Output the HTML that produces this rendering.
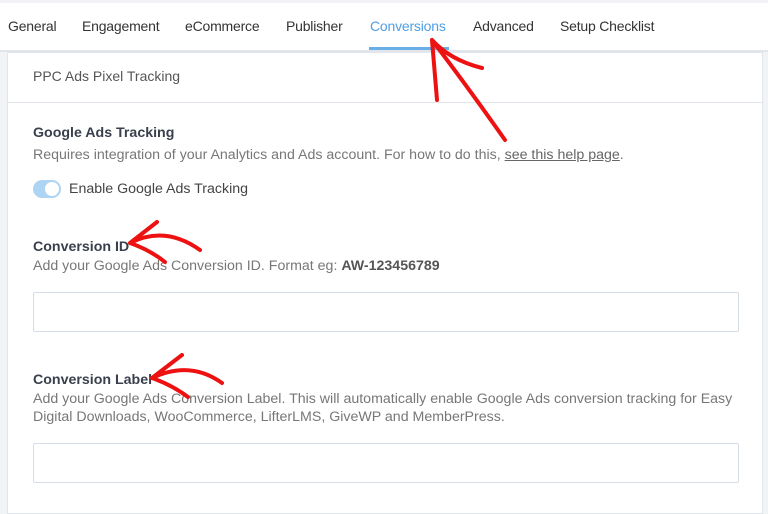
<!DOCTYPE html>
<html><head><style>
body{margin:0;width:768px;height:509px;background:#f1f3f6;font-family:"Liberation Sans",sans-serif;position:relative;overflow:hidden}
.nav{position:absolute;top:3px;left:0;width:768px;height:47px;background:#fff;border-bottom:2px solid #e2e6ec}
.nav span{position:absolute;top:15px;font-size:14px;color:#333;letter-spacing:-0.2px}
.nav .act{color:#509fe2}
.ul{position:absolute;left:369px;top:47px;width:80px;height:3px;background:#6aaee8}
.panel{position:absolute;left:7px;top:52px;width:754px;height:460px;background:#fff;border:1px solid #e2e6ec}
.hdr{position:absolute;left:0;top:0;width:754px;height:49px;border-bottom:1px solid #e2e6ec}
.t{position:absolute;white-space:nowrap;font-size:14.2px;color:#777}
.b{font-weight:bold;color:#393f4c;font-size:14.2px}
.inp{position:absolute;left:25px;width:704px;height:38px;border:1px solid #d6dde5;border-radius:2px;background:#fff}
</style></head><body>
<div class="nav">
<span style="left:8px">General</span>
<span style="left:82px">Engagement</span>
<span style="left:185px">eCommerce</span>
<span style="left:286px">Publisher</span>
<span class="act" style="left:370px">Conversions</span>
<span style="left:473px">Advanced</span>
<span style="left:560px">Setup Checklist</span>
</div>
<div class="ul"></div>
<div class="panel">
<div class="hdr"><div class="t" style="left:25px;top:15px;color:#555;font-size:14px">PPC Ads Pixel Tracking</div></div>
<div class="t b" style="left:25px;top:72px">Google Ads Tracking</div>
<div class="t" style="left:25px;top:94px">Requires integration of your Analytics and Ads account. For how to do this, <span style="text-decoration:underline;color:#666">see this help page</span>.</div>
<div style="position:absolute;left:25px;top:127px;width:28px;height:18px;border-radius:9px;background:#aed4f3"><div style="position:absolute;right:2px;top:2px;width:14px;height:14px;border-radius:7px;background:#fff"></div></div>
<div class="t" style="left:61px;top:128px;color:#444">Enable Google Ads Tracking</div>
<div class="t b" style="left:25px;top:186px">Conversion ID</div>
<div class="t" style="left:25px;top:205px">Add your Google Ads Conversion ID. Format eg: <b style="color:#555">AW-123456789</b></div>
<div class="inp" style="top:239px"></div>
<div class="t b" style="left:25px;top:319px">Conversion Label</div>
<div class="t" style="left:25px;top:338px">Add your Google Ads Conversion Label. This will automatically enable Google Ads conversion tracking for Easy</div>
<div class="t" style="left:25px;top:356px">Digital Downloads, WooCommerce, LifterLMS, GiveWP and MemberPress.</div>
<div class="inp" style="top:390px"></div>
</div>
<svg width="768" height="509" style="position:absolute;left:0;top:0" fill="none" stroke="#ee1111" stroke-width="4" stroke-linecap="round" stroke-linejoin="round">
<path d="M505 140 Q470 90 432 40 M432 40 L437 100 M432 40 Q450 60 482 68"/>
<path d="M130 243 Q165 225 200 250 M130 243 L157 222 M130 243 Q150 250 165 262"/>
<path d="M152 378 Q190 360 222 383 M152 378 L182 355 M152 378 Q172 385 188 397"/>
</svg>
</body></html>
